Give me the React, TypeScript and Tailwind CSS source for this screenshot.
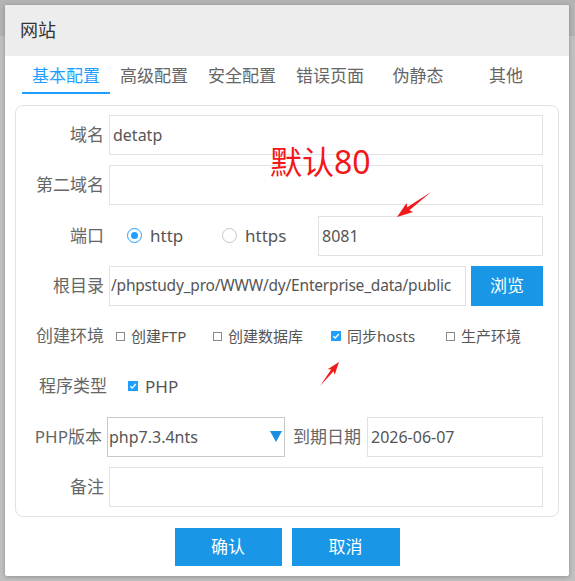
import React from "react";

const tabs = ["基本配置", "高级配置", "安全配置", "错误页面", "伪静态", "其他"];

function Label({ text, className = "w-[88px]" }: { text: string; className?: string }) {
  return (
    <div className={`${className} shrink-0 text-right text-[17px] text-[#666] leading-[40px]`}>
      {text}
    </div>
  );
}

function Field({ value, className = "flex-1" }: { value?: string; className?: string }) {
  return (
    <div className={`${className} h-[40px] border border-[#e2e2e2] flex items-center pl-[3px] text-[16px] text-[#555] overflow-hidden whitespace-nowrap`}>
      {value}
    </div>
  );
}

function Radio({ checked, label }: { checked?: boolean; label: string }) {
  return (
    <div className="flex items-center gap-[8px]">
      <span
        className={`w-[15px] h-[15px] rounded-full border flex items-center justify-center ${
          checked ? "border-[#1e9fff]" : "border-[#c6c6c6]"
        }`}
      >
        {checked && <span className="w-[7px] h-[7px] rounded-full bg-[#1e9fff]" />}
      </span>
      <span className="text-[17px] text-[#555]">{label}</span>
    </div>
  );
}

function Tick() {
  return (
    <span className="w-[10px] h-[10px] bg-[#1e9fff] flex items-center justify-center">
      <svg width="8" height="8" viewBox="0 0 8 8">
        <path d="M1.3 4.2 L3.2 6 L6.8 2" fill="none" stroke="#fff" strokeWidth="1.3" />
      </svg>
    </span>
  );
}

function Check({ checked, label, className = "" }: { checked?: boolean; label: string; className?: string }) {
  return (
    <div className={`flex items-center gap-[6px] ${className}`}>
      {checked ? <Tick /> : <span className="w-[9px] h-[9px] border border-[#8a8a8a] bg-white" />}
      <span className="text-[15px] text-[#555]">{label}</span>
    </div>
  );
}

export default function App() {
  return (
    <div className="relative w-[575px] h-[581px] p-[5px] bg-[linear-gradient(#b3b3b3_0,#b3b3b3_36px,#c0c0c0_36px)] [font-family:'Noto_Sans','Noto_Sans_CJK_SC',sans-serif] overflow-hidden">
      <div className="w-[564px] h-[571px] bg-white rounded-[2px] shadow-[0_1px_4px_rgba(0,0,0,0.25)] flex flex-col">
        {/* title bar */}
        <div className="h-[51px] shrink-0 bg-[#ededed] rounded-t-[2px] pl-[15px] flex items-center text-[18px] text-[#333]">
          网站
        </div>

        {/* tabs */}
        <div className="h-[38px] shrink-0 flex pl-[17px]">
          {tabs.map((t, i) => (
            <div
              key={t}
              className={`w-[88px] h-[38px] pt-[11px] text-center text-[17px] leading-[18px] border-b-2 ${
                i === 0 ? "text-[#1e9fff] border-[#1e9fff]" : "text-[#666] border-transparent"
              }`}
            >
              {t}
            </div>
          ))}
        </div>

        {/* form */}
        <div className="mt-[11px] mx-[10px] h-[412px] border border-[#e2e2e2] rounded-[8px] pt-[9px] pr-[15px] flex flex-col gap-[10.3px]">
          <div className="flex gap-[5px]">
            <Label text="域名" />
            <Field value="detatp" />
          </div>
          <div className="flex gap-[5px]">
            <Label text="第二域名" />
            <Field />
          </div>
          <div className="flex gap-[5px]">
            <Label text="端口" />
            <div className="w-[209px] pl-[18px] flex items-center">
              <div className="w-[95px]">
                <Radio checked label="http" />
              </div>
              <Radio label="https" />
            </div>
            <Field value="8081" className="flex-1 -ml-[5px]" />
          </div>
          <div className="flex gap-[5px]">
            <Label text="根目录" />
            <div className="flex-1 h-[40px] border border-[#e2e2e2] flex items-center pl-[1px] text-[15.5px] tracking-[-0.2px] text-[#555] overflow-hidden whitespace-nowrap">
              /phpstudy_pro/WWW/dy/Enterprise_data/public
            </div>
            <button className="w-[72px] h-[40px] bg-[#1a96e6] text-white text-[17px]">浏览</button>
          </div>
          <div className="flex gap-[5px] items-center h-[40px]">
            <Label text="创建环境" />
            <div className="flex items-center pl-[7px]">
              <Check label="创建FTP" className="w-[97px]" />
              <Check label="创建数据库" className="w-[118px]" />
              <Check checked label="同步hosts" className="w-[115px]" />
              <Check label="生产环境" />
            </div>
          </div>
          <div className="flex gap-[5px] items-center h-[40px]">
            <Label text="程序类型" className="w-[91px]" />
            <div className="pl-[16px] flex items-center gap-[7px]">
              <Tick />
              <span className="text-[17px] text-[#555]">PHP</span>
            </div>
          </div>
          <div className="flex gap-[5px] items-center">
            <Label text="PHP版本" className="w-[86px]" />
            <div className="w-[178px] h-[40px] border border-[#c9c9c9] flex items-center justify-between pl-[1px] pr-[2px] text-[16px] text-[#555]">
              <span>php7.3.4nts</span>
              <svg width="12" height="11" viewBox="0 0 12 11">
                <path d="M0 0 H12 L6 11 Z" fill="#1a8fe0" />
              </svg>
            </div>
            <div className="ml-[3px] text-[17px] text-[#666] leading-[40px]">到期日期</div>
            <Field value="2026-06-07" className="flex-1 ml-[1px]" />
          </div>
          <div className="flex gap-[5px]">
            <Label text="备注" />
            <Field />
          </div>
        </div>

        {/* actions */}
        <div className="mt-[11px] flex justify-center gap-[10px]">
          <button className="w-[107px] h-[38px] bg-[#1a96e6] text-white text-[17px]">确认</button>
          <button className="w-[108px] h-[38px] bg-[#1a96e6] text-white text-[17px]">取消</button>
        </div>
      </div>

      {/* red annotations */}
      <div className="absolute left-[270px] top-[142px] text-[32px] leading-[40px] text-[#f3171a] pointer-events-none">
        默认80
      </div>
      <svg className="absolute inset-0 pointer-events-none" width="575" height="581" viewBox="0 0 575 581">
        <polygon
          points="431,192 409.4,210.2 413.2,212 397,217 406.6,203 407.2,207.2"
          fill="#f01a1a"
        />
        <polygon
          points="320,386 331.2,369.5 327.7,369.2 339,362 334.7,374.8 333.6,371.3"
          fill="#f01a1a"
        />
      </svg>
    </div>
  );
}
